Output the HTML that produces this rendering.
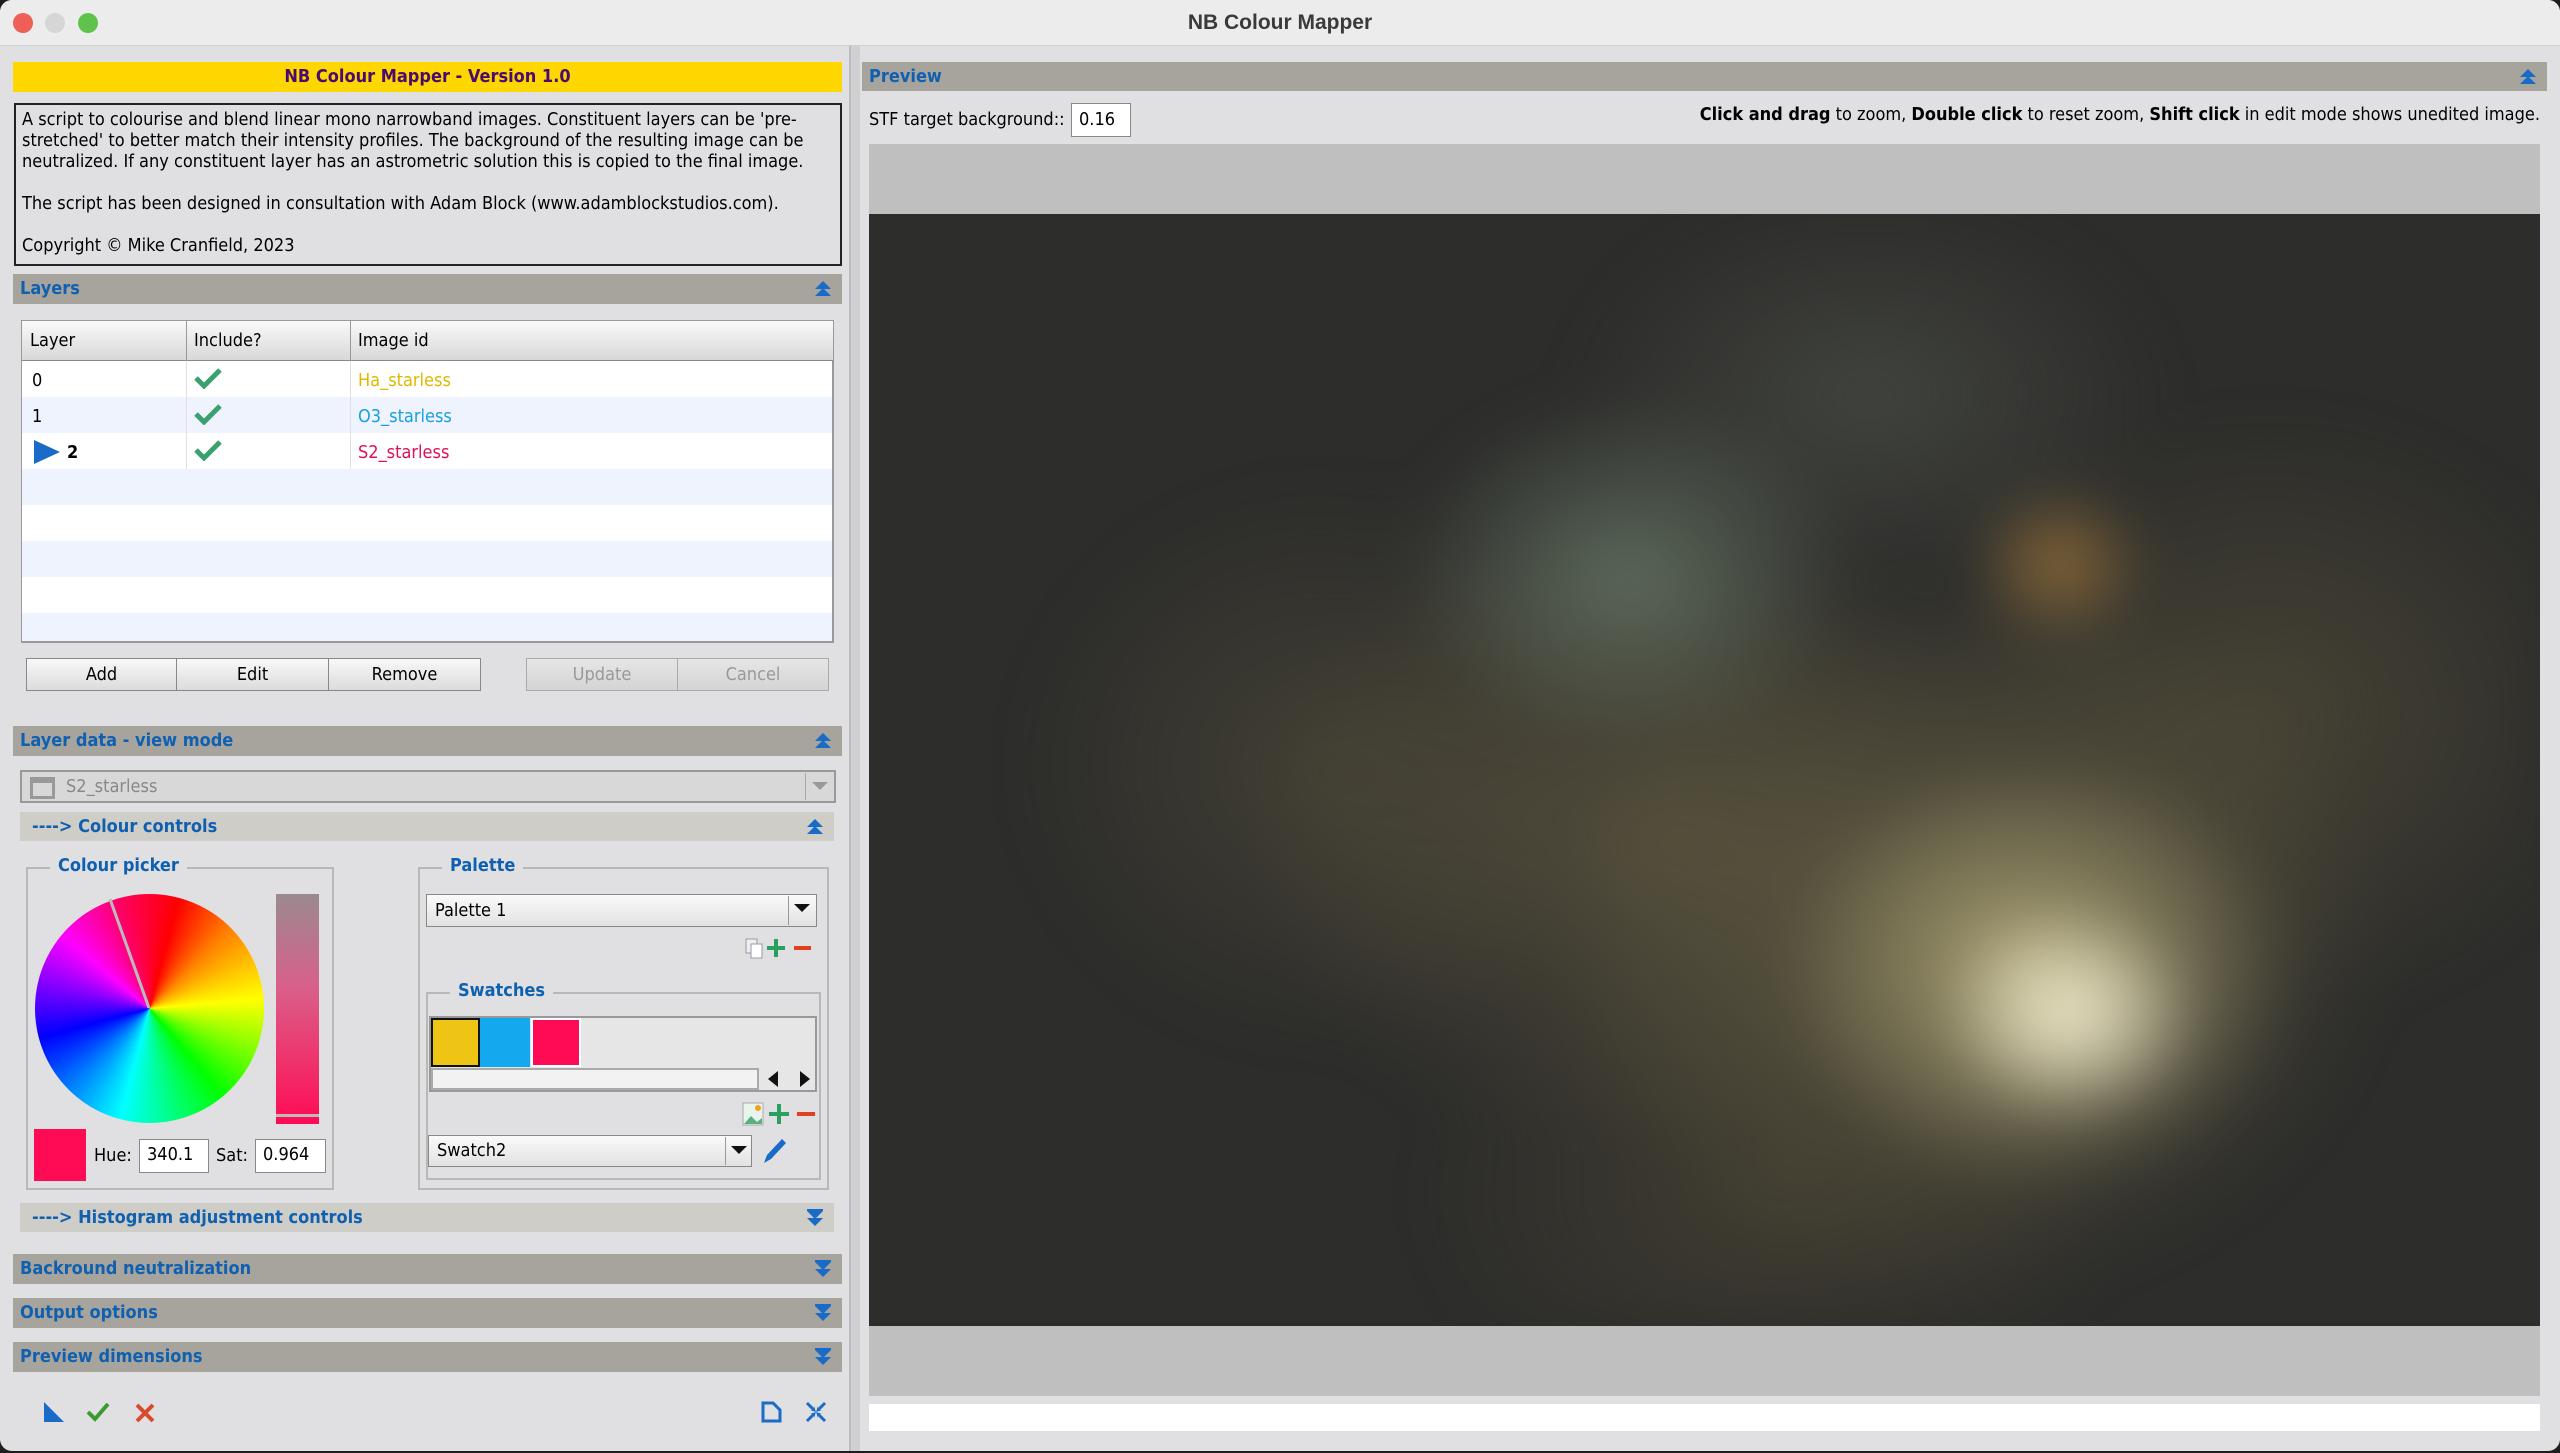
<!DOCTYPE html>
<html><head><meta charset="utf-8"><style>
*{box-sizing:border-box;margin:0;padding:0}
body{width:2560px;height:1453px;overflow:hidden;background:#1e1e1e;font-family:"DejaVu Sans Condensed","DejaVu Sans","Liberation Sans",sans-serif;font-stretch:condensed;font-size:18px;color:#000;position:relative}
.a{position:absolute}
.win{left:0;top:0;width:2560px;height:1451px;background:#e0e0e2;border-radius:12px;overflow:hidden}
.tb{left:0;top:0;width:2560px;height:46px;background:#ececec;border-bottom:1px solid #d0d0d0;text-align:center;line-height:46px;font-family:"Liberation Sans",sans-serif;font-weight:bold;font-size:21px;color:#3a3a3a}
.dot{width:20px;height:20px;border-radius:50%;top:13px}
.hdr{background:#a7a49e;color:#1060b0;font-weight:bold;padding-left:7px;line-height:30px;height:30px}
.sub{background:#cfcdc8;color:#1060b0;font-weight:bold;padding-left:12px;line-height:29px;height:29px}
.arr{position:absolute;right:10px;top:5px;width:18px;height:20px}
.btn{background:linear-gradient(#f8f8f8,#dcdcdc);border:1px solid #888;text-align:center;line-height:31px;height:33px}
.dis{color:#999;border-color:#aaa;background:linear-gradient(#e6e6e6,#d4d4d4)}
.row{left:22px;width:810px;height:36px;line-height:36px}
.grp{border:2px solid #b8b8b8}
.gt{background:#e0e0e2;color:#1060b0;font-weight:bold;padding:0 8px;line-height:22px}
.inp{background:#fff;border:1px solid #888;line-height:30px;padding-left:7px}
.cmb{background:linear-gradient(#fafafa,#e2e2e2);border:1px solid #888;padding-left:8px}
</style></head><body>
<div class="a win">
<div class="a tb">NB Colour Mapper</div>
<div class="a dot" style="left:13px;background:#ed5f57"></div>
<div class="a dot" style="left:45px;background:#d6d6d6"></div>
<div class="a dot" style="left:78px;background:#5fc24a"></div>

<div class="a" style="left:13px;top:62px;width:829px;height:30px;background:#fed700;color:#4a0a70;font-weight:bold;text-align:center;line-height:30px">NB Colour Mapper - Version 1.0</div>
<div class="a" style="left:14px;top:103px;width:828px;height:163px;border:2px solid #222;padding:4px 6px;line-height:21px">A script to colourise and blend linear mono narrowband images. Constituent layers can be 'pre-stretched' to better match their intensity profiles. The background of the resulting image can be neutralized. If any constituent layer has an astrometric solution this is copied to the final image.<br><br>The script has been designed in consultation with Adam Block (www.adamblockstudios.com).<br><br>Copyright © Mike Cranfield, 2023</div>

<div class="a hdr" style="left:13px;top:274px;width:829px">Layers<svg class="arr" viewBox="0 0 18 20"><path d="M9 2L17 10H1Z M9 9L17 17H1Z" fill="#1a6ac8"/></svg></div>

<div class="a" style="left:21px;top:320px;width:813px;height:323px;border:2px solid #999;background:#fff"></div>
<div class="a" style="left:22px;top:321px;width:811px;height:40px;background:linear-gradient(#fafafa,#d8d8d8);border-bottom:1px solid #888"></div>
<div class="a" style="left:186px;top:321px;width:1px;height:40px;background:#999"></div>
<div class="a" style="left:350px;top:321px;width:1px;height:40px;background:#999"></div>
<div class="a" style="left:30px;top:321px;line-height:40px">Layer</div>
<div class="a" style="left:194px;top:321px;line-height:40px">Include?</div>
<div class="a" style="left:358px;top:321px;line-height:40px">Image id</div>
<div class="a row" style="top:361px;background:#fff"></div>
<div class="a row" style="top:397px;background:#eef3fd"></div>
<div class="a row" style="top:433px;background:#fff"></div>
<div class="a row" style="top:469px;background:#eef3fd"></div>
<div class="a row" style="top:505px;background:#fff"></div>
<div class="a row" style="top:541px;background:#eef3fd"></div>
<div class="a row" style="top:577px;background:#fff"></div>
<div class="a row" style="top:613px;height:28px;background:#eef3fd"></div>
<div class="a" style="left:186px;top:361px;width:1px;height:108px;background:#e0e0e0"></div>
<div class="a" style="left:350px;top:361px;width:1px;height:108px;background:#e0e0e0"></div>
<div class="a" style="left:32px;top:363px;line-height:36px">0</div>
<div class="a" style="left:32px;top:399px;line-height:36px">1</div>
<svg class="a" style="left:34px;top:440px" width="26" height="24"><path d="M0 0L26 12L0 24Z" fill="#1a6ac8"/></svg>
<div class="a" style="left:67px;top:435px;line-height:36px;font-weight:bold">2</div>
<svg class="a" style="left:194px;top:367px" width="28" height="22"><path d="M2 11L10 19L26 3" stroke="#3aa070" stroke-width="5" fill="none"/></svg>
<svg class="a" style="left:194px;top:403px" width="28" height="22"><path d="M2 11L10 19L26 3" stroke="#3aa070" stroke-width="5" fill="none"/></svg>
<svg class="a" style="left:194px;top:439px" width="28" height="22"><path d="M2 11L10 19L26 3" stroke="#3aa070" stroke-width="5" fill="none"/></svg>
<div class="a" style="left:358px;top:363px;line-height:36px;color:#e0b800">Ha_starless</div>
<div class="a" style="left:358px;top:399px;line-height:36px;color:#18a0e0">O3_starless</div>
<div class="a" style="left:358px;top:435px;line-height:36px;color:#e0105a">S2_starless</div>

<div class="a btn" style="left:26px;top:658px;width:151px">Add</div>
<div class="a btn" style="left:176px;top:658px;width:153px">Edit</div>
<div class="a btn" style="left:328px;top:658px;width:153px">Remove</div>
<div class="a btn dis" style="left:526px;top:658px;width:152px">Update</div>
<div class="a btn dis" style="left:677px;top:658px;width:152px">Cancel</div>

<div class="a hdr" style="left:13px;top:726px;width:829px">Layer data - view mode<svg class="arr" viewBox="0 0 18 20"><path d="M9 2L17 10H1Z M9 9L17 17H1Z" fill="#1a6ac8"/></svg></div>
<div class="a" style="left:20px;top:770px;width:816px;height:33px;border:2px solid #999;background:#d8d8d8;color:#888;line-height:29px;padding-left:44px">S2_starless</div>
<div class="a" style="left:30px;top:777px;width:25px;height:22px;border:3px solid #999;border-top-width:6px"></div>
<div class="a" style="left:805px;top:773px;width:1px;height:27px;background:#aaa"></div>
<svg class="a" style="left:812px;top:782px" width="16" height="10"><path d="M0 0H16L8 8Z" fill="#999"/></svg>

<div class="a sub" style="left:20px;top:812px;width:814px">----&gt; Colour controls<svg class="arr" viewBox="0 0 18 20"><path d="M9 2L17 10H1Z M9 9L17 17H1Z" fill="#1a6ac8"/></svg></div>

<div class="a grp" style="left:26px;top:867px;width:308px;height:323px"></div>
<div class="a gt" style="left:50px;top:855px">Colour picker</div>
<div class="a" style="left:35px;top:894px;width:229px;height:229px;border-radius:50%;background:conic-gradient(from 15deg,#ff0000,#ff8000 30deg,#ffff00 70deg,#00ff00 125deg,#00ffff 180deg,#0000ff 240deg,#ff00ff 295deg,#ff0060 330deg,#ff0000 360deg)"></div>
<svg class="a" style="left:100px;top:895px" width="52" height="120"><path d="M10 4L49 113" stroke="#bbb" stroke-width="3"/></svg>
<div class="a" style="left:276px;top:894px;width:43px;height:230px;background:linear-gradient(#9a8a90,#d8608a 40%,#f0306a 75%,#ff0a55)"></div>
<div class="a" style="left:276px;top:1114px;width:43px;height:3px;background:#bbb"></div>
<div class="a" style="left:34px;top:1129px;width:52px;height:52px;background:#fe0a55"></div>
<div class="a" style="left:94px;top:1142px;line-height:28px">Hue:</div>
<div class="a inp" style="left:139px;top:1139px;width:70px;height:34px">340.1</div>
<div class="a" style="left:216px;top:1142px;line-height:28px">Sat:</div>
<div class="a inp" style="left:255px;top:1139px;width:71px;height:34px">0.964</div>

<div class="a grp" style="left:418px;top:867px;width:411px;height:323px"></div>
<div class="a gt" style="left:442px;top:855px">Palette</div>
<div class="a cmb" style="left:426px;top:894px;width:391px;height:33px;line-height:31px">Palette 1</div>
<div class="a" style="left:788px;top:896px;width:1px;height:29px;background:#999"></div>
<svg class="a" style="left:794px;top:904px" width="16" height="10"><path d="M0 0H16L8 8Z" fill="#111"/></svg>
<svg class="a" style="left:744px;top:935px" width="70" height="26"><rect x="2" y="4" width="11" height="14" fill="#eee" stroke="#99a"/><rect x="7" y="9" width="11" height="14" fill="#fff" stroke="#99a"/><path d="M32 4V22M23 13H41" stroke="#2aa060" stroke-width="4"/><path d="M50 13H67" stroke="#e04020" stroke-width="4"/></svg>

<div class="a grp" style="left:426px;top:992px;width:395px;height:188px"></div>
<div class="a gt" style="left:450px;top:980px">Swatches</div>
<div class="a" style="left:429px;top:1016px;width:388px;height:76px;border:2px solid #999;background:#e6e6e6"></div>
<div class="a" style="left:431px;top:1018px;width:49px;height:49px;background:#efc515;border:2px solid #111"></div>
<div class="a" style="left:480px;top:1018px;width:50px;height:49px;background:#14a8ee"></div>
<div class="a" style="left:531px;top:1018px;width:50px;height:49px;background:#fe0a55;border:2px solid #fff"></div>
<div class="a" style="left:431px;top:1068px;width:328px;height:22px;background:#f2f2f2;border:2px solid #aaa"></div>
<svg class="a" style="left:764px;top:1070px" width="50" height="18"><path d="M14 1V17L4 9Z M36 1V17L46 9Z" fill="#111"/></svg>
<svg class="a" style="left:741px;top:1100px" width="76" height="28"><rect x="2" y="3" width="20" height="22" fill="#e8f4ec" stroke="#aaa"/><path d="M3 24L10 16L16 22L21 18V24Z" fill="#5ab080"/><circle cx="17" cy="8" r="3" fill="#f0a020"/><path d="M38 4V24M28 14H48" stroke="#2aa060" stroke-width="4"/><path d="M56 14H74" stroke="#e04020" stroke-width="4"/></svg>
<div class="a cmb" style="left:428px;top:1135px;width:324px;height:32px;line-height:30px">Swatch2</div>
<div class="a" style="left:725px;top:1137px;width:1px;height:28px;background:#999"></div>
<svg class="a" style="left:731px;top:1146px" width="16" height="10"><path d="M0 0H16L8 8Z" fill="#111"/></svg>
<svg class="a" style="left:760px;top:1135px" width="28" height="32"><path d="M4 28L7 20L22 4L26 8L11 24Z" fill="#1a6ac8"/></svg>

<div class="a sub" style="left:20px;top:1203px;width:814px">----&gt; Histogram adjustment controls<svg class="arr" viewBox="0 0 18 20"><path d="M1 3L17 3L9 11Z M1 10L17 10L9 18Z" fill="#1a6ac8"/><rect x="1" y="1" width="16" height="2" fill="#1a6ac8"/></svg></div>
<div class="a hdr" style="left:13px;top:1254px;width:829px">Backround neutralization<svg class="arr" viewBox="0 0 18 20"><path d="M1 3L17 3L9 11Z M1 10L17 10L9 18Z" fill="#1a6ac8"/><rect x="1" y="1" width="16" height="2" fill="#1a6ac8"/></svg></div>
<div class="a hdr" style="left:13px;top:1298px;width:829px">Output options<svg class="arr" viewBox="0 0 18 20"><path d="M1 3L17 3L9 11Z M1 10L17 10L9 18Z" fill="#1a6ac8"/><rect x="1" y="1" width="16" height="2" fill="#1a6ac8"/></svg></div>
<div class="a hdr" style="left:13px;top:1342px;width:829px">Preview dimensions<svg class="arr" viewBox="0 0 18 20"><path d="M1 3L17 3L9 11Z M1 10L17 10L9 18Z" fill="#1a6ac8"/><rect x="1" y="1" width="16" height="2" fill="#1a6ac8"/></svg></div>

<svg class="a" style="left:42px;top:1400px" width="24" height="24"><path d="M2 22V2L22 22Z" fill="#1a6ac8"/></svg>
<svg class="a" style="left:86px;top:1401px" width="24" height="22"><path d="M2 11L9 18L22 3" stroke="#3a9a30" stroke-width="4" fill="none"/></svg>
<svg class="a" style="left:134px;top:1402px" width="22" height="22"><path d="M3 3L19 19M19 3L3 19" stroke="#d84a30" stroke-width="4"/></svg>
<svg class="a" style="left:760px;top:1401px" width="22" height="22"><path d="M3 2H13L20 9V20H3Z" fill="none" stroke="#1a6ac8" stroke-width="3"/></svg>
<svg class="a" style="left:804px;top:1400px" width="24" height="24"><path d="M3 3L10 10M21 3L14 10M3 21L10 14M21 21L14 14" stroke="#1a6ac8" stroke-width="3"/><path d="M12 12L6 10H10V6Z M12 12L18 10H14V6Z M12 12L6 14H10V18Z M12 12L18 14H14V18Z" fill="#1a6ac8"/></svg>

<div class="a" style="left:849px;top:46px;width:11px;height:1407px;background:#d0d0d2;border-left:2px solid #bbb"></div>

<div class="a hdr" style="left:862px;top:62px;width:1685px;height:29px;line-height:29px">Preview<svg class="arr" viewBox="0 0 18 20"><path d="M9 2L17 10H1Z M9 9L17 17H1Z" fill="#1a6ac8"/></svg></div>
<div class="a" style="left:869px;top:106px;line-height:28px">STF target background::</div>
<div class="a inp" style="left:1071px;top:103px;width:60px;height:34px;line-height:32px">0.16</div>
<div class="a" style="right:20px;top:101px;line-height:28px"><b>Click and drag</b> to zoom, <b>Double click</b> to reset zoom, <b>Shift click</b> in edit mode shows unedited image.</div>

<div class="a" style="left:869px;top:144px;width:1671px;height:1252px;background:#bfbfbf"></div>
<div class="a" style="left:869px;top:214px;width:1671px;height:1112px;background:#2d2d2b;overflow:hidden">
 <div class="a" style="left:0;top:0;width:1671px;height:1112px;filter:blur(25px);background:
 radial-gradient(ellipse 130px 110px at 1200px 800px,rgba(245,240,210,.95),rgba(0,0,0,0)),
 radial-gradient(ellipse 260px 220px at 1170px 760px,rgba(190,180,130,.8),rgba(0,0,0,0)),
 radial-gradient(ellipse 420px 360px at 1100px 720px,rgba(120,112,75,.6),rgba(0,0,0,0)),
 radial-gradient(ellipse 90px 80px at 1190px 350px,rgba(170,125,60,.75),rgba(0,0,0,0)),
 radial-gradient(ellipse 230px 180px at 760px 360px,rgba(115,135,115,.65),rgba(0,0,0,0)),
 radial-gradient(ellipse 400px 320px at 780px 620px,rgba(110,100,70,.55),rgba(0,0,0,0)),
 radial-gradient(ellipse 300px 280px at 450px 550px,rgba(85,80,60,.5),rgba(0,0,0,0)),
 radial-gradient(ellipse 300px 200px at 1000px 180px,rgba(85,90,80,.5),rgba(0,0,0,0)),
 radial-gradient(ellipse 350px 300px at 1400px 500px,rgba(95,88,62,.5),rgba(0,0,0,0)),
 radial-gradient(ellipse 350px 250px at 900px 980px,rgba(85,78,55,.45),rgba(0,0,0,0))"></div>
</div>
<div class="a" style="left:869px;top:1404px;width:1671px;height:27px;background:#fff"></div>
</div>
</body></html>
